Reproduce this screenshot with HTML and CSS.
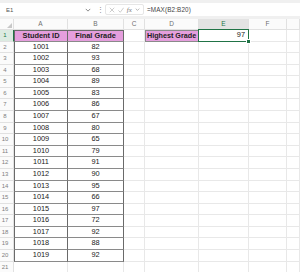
FILE: index.html
```html
<!DOCTYPE html>
<html>
<head>
<meta charset="utf-8">
<link rel="stylesheet" href="styles.css">
</head>
<body>
<div class="app">
  <div class="topstrip"></div>
  <div class="fbar">
    <div class="namebox"><span>E1</span><svg class="chev" viewBox="0 0 8 5" width="6" height="4"><path d="M1 1 L4 4 L7 1" fill="none" stroke="#666" stroke-width="1"/></svg></div>
    <div class="dots">⋮</div>
    <div class="fxbox">
      <svg viewBox="0 0 8 8" width="6" height="6"><path d="M1 1 L7 7 M7 1 L1 7" stroke="#b5b5b5" stroke-width="0.9"/></svg>
      <svg viewBox="0 0 8 8" width="6" height="6"><path d="M0.5 4.5 L3 7 L7.5 1" fill="none" stroke="#b5b5b5" stroke-width="0.9"/></svg>
      <span class="fx">fx</span>
      <svg viewBox="0 0 8 5" width="5" height="3"><path d="M1 1 L4 4 L7 1" fill="none" stroke="#888" stroke-width="1"/></svg>
    </div>
    <div class="formula">=MAX(B2:B20)</div>
  </div>
  <div class="gap"></div>
  <div class="sheet">
    <div class="corner"><svg viewBox="0 0 6 6" width="5" height="5"><path d="M6 0 L6 6 L0 6 Z" fill="#c8c8c8"/></svg></div>
    <div class="ch">A</div><div class="ch">B</div><div class="ch">C</div><div class="ch">D</div><div class="ch sel">E</div><div class="ch">F</div><div class="ch"></div>

    <div class="rh sel">1</div><div class="c t a hd">Student ID</div><div class="c t b hd">Final Grade</div><div class="c"></div><div class="c lbl">Highest Grade</div><div class="c active">97</div><div class="c"></div><div class="c"></div>
    <div class="rh">2</div><div class="c t a">1001</div><div class="c t b">82</div><div class="c"></div><div class="c"></div><div class="c"></div><div class="c"></div><div class="c"></div>
    <div class="rh">3</div><div class="c t a">1002</div><div class="c t b">93</div><div class="c"></div><div class="c"></div><div class="c"></div><div class="c"></div><div class="c"></div>
    <div class="rh">4</div><div class="c t a">1003</div><div class="c t b">68</div><div class="c"></div><div class="c"></div><div class="c"></div><div class="c"></div><div class="c"></div>
    <div class="rh">5</div><div class="c t a">1004</div><div class="c t b">89</div><div class="c"></div><div class="c"></div><div class="c"></div><div class="c"></div><div class="c"></div>
    <div class="rh">6</div><div class="c t a">1005</div><div class="c t b">83</div><div class="c"></div><div class="c"></div><div class="c"></div><div class="c"></div><div class="c"></div>
    <div class="rh">7</div><div class="c t a">1006</div><div class="c t b">86</div><div class="c"></div><div class="c"></div><div class="c"></div><div class="c"></div><div class="c"></div>
    <div class="rh">8</div><div class="c t a">1007</div><div class="c t b">67</div><div class="c"></div><div class="c"></div><div class="c"></div><div class="c"></div><div class="c"></div>
    <div class="rh">9</div><div class="c t a">1008</div><div class="c t b">80</div><div class="c"></div><div class="c"></div><div class="c"></div><div class="c"></div><div class="c"></div>
    <div class="rh">10</div><div class="c t a">1009</div><div class="c t b">65</div><div class="c"></div><div class="c"></div><div class="c"></div><div class="c"></div><div class="c"></div>
    <div class="rh">11</div><div class="c t a">1010</div><div class="c t b">79</div><div class="c"></div><div class="c"></div><div class="c"></div><div class="c"></div><div class="c"></div>
    <div class="rh">12</div><div class="c t a">1011</div><div class="c t b">91</div><div class="c"></div><div class="c"></div><div class="c"></div><div class="c"></div><div class="c"></div>
    <div class="rh">13</div><div class="c t a">1012</div><div class="c t b">90</div><div class="c"></div><div class="c"></div><div class="c"></div><div class="c"></div><div class="c"></div>
    <div class="rh">14</div><div class="c t a">1013</div><div class="c t b">95</div><div class="c"></div><div class="c"></div><div class="c"></div><div class="c"></div><div class="c"></div>
    <div class="rh">15</div><div class="c t a">1014</div><div class="c t b">66</div><div class="c"></div><div class="c"></div><div class="c"></div><div class="c"></div><div class="c"></div>
    <div class="rh">16</div><div class="c t a">1015</div><div class="c t b">97</div><div class="c"></div><div class="c"></div><div class="c"></div><div class="c"></div><div class="c"></div>
    <div class="rh">17</div><div class="c t a">1016</div><div class="c t b">72</div><div class="c"></div><div class="c"></div><div class="c"></div><div class="c"></div><div class="c"></div>
    <div class="rh">18</div><div class="c t a">1017</div><div class="c t b">92</div><div class="c"></div><div class="c"></div><div class="c"></div><div class="c"></div><div class="c"></div>
    <div class="rh">19</div><div class="c t a">1018</div><div class="c t b">88</div><div class="c"></div><div class="c"></div><div class="c"></div><div class="c"></div><div class="c"></div>
    <div class="rh">20</div><div class="c t a">1019</div><div class="c t b">92</div><div class="c"></div><div class="c"></div><div class="c"></div><div class="c"></div><div class="c"></div>
    <div class="rh">21</div><div class="c"></div><div class="c"></div><div class="c"></div><div class="c"></div><div class="c"></div><div class="c"></div><div class="c"></div>
  </div>
</div>
</body>
</html>
```

FILE: styles.css
```css
html, body {
  margin: 0;
  padding: 0;
  background: #ffffff;
}
body {
  width: 300px;
  height: 272px;
  overflow: hidden;
  font-family: "Liberation Sans", Arial, sans-serif;
}
.app {
  width: 300px;
}
.topstrip {
  height: 3px;
  background: #f0f0f0;
}
.fbar {
  height: 13px;
  display: flex;
  align-items: center;
  background: #ffffff;
}
.namebox {
  margin-left: 3px;
  width: 93px;
  height: 11px;
  box-sizing: border-box;
  display: flex;
  align-items: center;
  justify-content: space-between;
  padding: 0 5px 0 3px;
  font-size: 6px;
  color: #555;
}
.chev {
  display: block;
}
.dots {
  width: 9px;
  text-align: center;
  font-size: 7px;
  color: #888;
  line-height: 11px;
}
.fxbox {
  width: 39px;
  height: 11px;
  box-sizing: border-box;
  border: 1px solid #e6e6e6;
  border-radius: 2px;
  display: flex;
  align-items: center;
  justify-content: space-around;
  padding: 0 2px;
}
.fxbox svg {
  display: block;
}
.fx {
  font-family: "Liberation Serif", serif;
  font-style: italic;
  font-size: 7px;
  color: #777;
}
.formula {
  flex: 1;
  margin-left: 2px;
  font-size: 6.3px;
  color: #444;
  padding-left: 1px;
  letter-spacing: 0.15px;
}
.gap {
  height: 3px;
  background: #f0f0f0;
}
.sheet {
  display: grid;
  grid-template-columns: 14px 54px 56px 21px 54px 50px 38px 13px;
  grid-template-rows: 11px repeat(21, 11.58px);
}
.sheet > div {
  box-sizing: border-box;
  overflow: visible;
  white-space: nowrap;
}
.corner {
  background: #fbfbfb;
  border-right: 1px solid #e1e1e1;
  border-bottom: 1px solid #e1e1e1;
  display: flex;
  align-items: flex-end;
  justify-content: flex-end;
  padding: 0 1px 1px 0;
}
.corner svg {
  display: block;
}
.ch {
  background: #fbfbfb;
  border-right: 1px solid #e1e1e1;
  border-bottom: 1px solid #e1e1e1;
  font-size: 6.5px;
  color: #707070;
  text-align: center;
  line-height: 10px;
}
.ch.sel {
  background: #e3e3e3;
  color: #217346;
  border-bottom: 1.5px solid #217346;
}
.rh {
  background: #fbfbfb;
  border-right: 1px solid #e1e1e1;
  border-bottom: 1px solid #e1e1e1;
  font-size: 6px;
  color: #808080;
  text-align: center;
  line-height: 10.5px;
  padding-right: 3px;
}
.rh.sel {
  background: #dcebe1;
  color: #217346;
  border-right: 1.5px solid #217346;
}
.c {
  border-right: 1px solid #e8e8e8;
  border-bottom: 1px solid #e8e8e8;
  font-size: 7.4px;
  color: #222;
  line-height: 10.6px;
  position: relative;
}
.c.t {
  border-right: 1px solid #6a6a6a;
  border-bottom: 1px solid #8a8a8a;
  text-align: center;
}
.c.a {
  border-left: 1px solid #6a6a6a;
}
.c.hd {
  background: #e59edd;
  font-weight: bold;
  color: #1e1e1e;
  border-top: 1px solid #6a6a6a;
  line-height: 9.6px;
}
.c.lbl {
  background: #e59edd;
  font-weight: bold;
  font-size: 7.2px;
  color: #1e1e1e;
  border: 1px solid #8a8a8a;
  padding-left: 1px;
  line-height: 9.6px;
}
.c.active {
  text-align: right;
  padding-right: 3px;
}
.c.active::after {
  content: "";
  position: absolute;
  left: -1px;
  top: -1px;
  right: -1px;
  bottom: -1px;
  border: 1.5px solid #217346;
}
.c.active::before {
  content: "";
  position: absolute;
  right: -3px;
  bottom: -3px;
  width: 3px;
  height: 3px;
  background: #217346;
  border: 1px solid #fff;
  z-index: 2;
}
```
